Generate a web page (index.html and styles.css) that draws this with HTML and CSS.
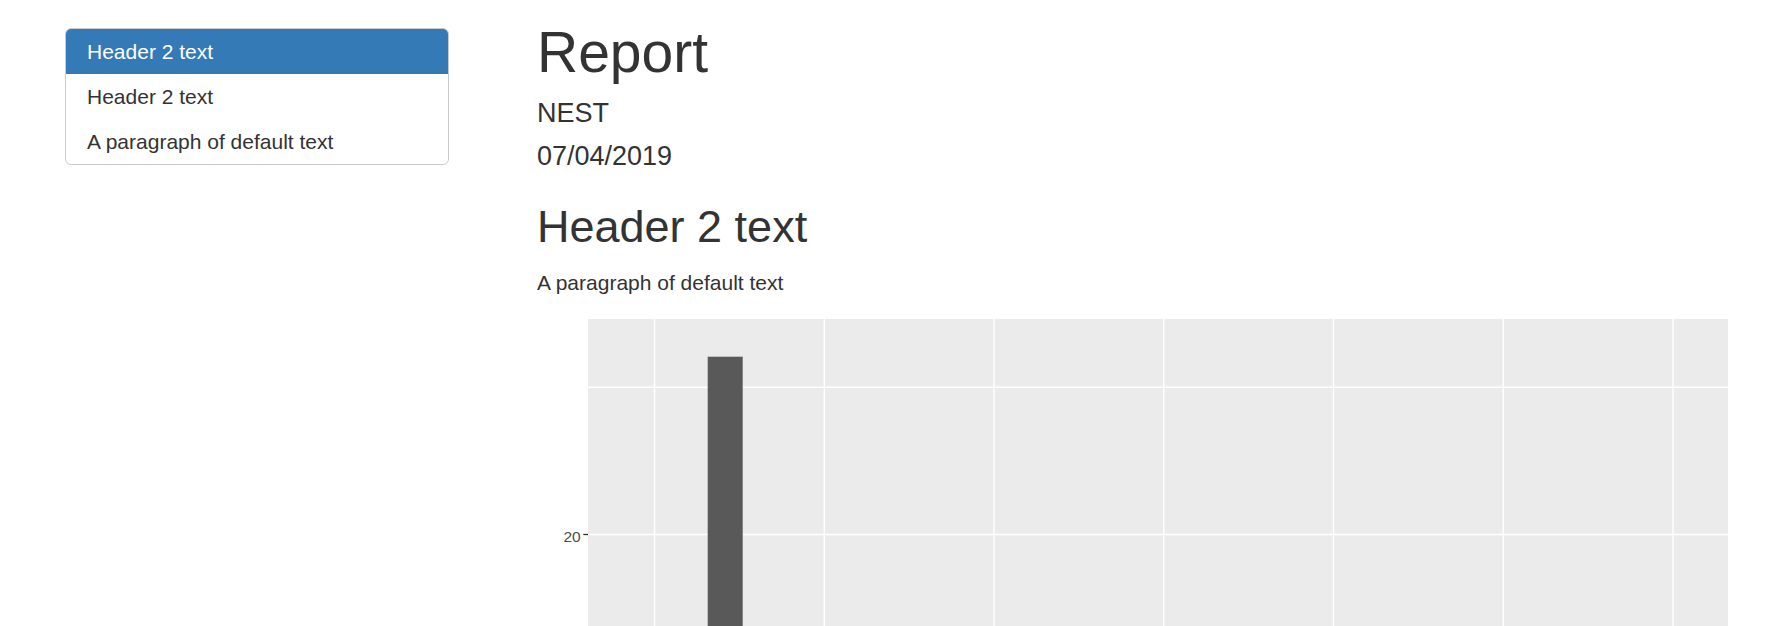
FILE: index.html
```html
<!DOCTYPE html>
<html lang="en">
<head>
<meta charset="utf-8">
<title>Report</title>
<link rel="stylesheet" href="styles.css">
</head>
<body>
<div class="page">
  <nav class="toc">
    <ul class="toc-list">
      <li class="toc-item active">Header 2 text</li>
      <li class="toc-item">Header 2 text</li>
      <li class="toc-item">A paragraph of default text</li>
    </ul>
  </nav>
  <main class="content">
    <h1 class="title">Report</h1>
    <h4 class="author">NEST</h4>
    <h4 class="date">07/04/2019</h4>
    <h2 class="section">Header 2 text</h2>
    <p class="para">A paragraph of default text</p>
    <svg class="chart" width="1250" height="326" viewBox="0 0 1250 326" xmlns="http://www.w3.org/2000/svg">
      <rect x="51" y="19" width="1140" height="320" fill="#ebebeb"/>
      <g stroke="#ffffff" stroke-width="1.4">
        <line x1="51" y1="87.3" x2="1191" y2="87.3"/>
        <line x1="51" y1="234.5" x2="1191" y2="234.5"/>
        <line x1="117.5" y1="19" x2="117.5" y2="326"/>
        <line x1="287.3" y1="19" x2="287.3" y2="326"/>
        <line x1="457" y1="19" x2="457" y2="326"/>
        <line x1="626.8" y1="19" x2="626.8" y2="326"/>
        <line x1="796.5" y1="19" x2="796.5" y2="326"/>
        <line x1="966.3" y1="19" x2="966.3" y2="326"/>
        <line x1="1136" y1="19" x2="1136" y2="326"/>
      </g>
      <rect x="170.7" y="56.7" width="35" height="280" fill="#595959"/>
      <line x1="46.3" y1="234.5" x2="51" y2="234.5" stroke="#333333" stroke-width="1.3"/>
      <text x="43.7" y="241.6" text-anchor="end" class="tick-label">20</text>
    </svg>
  </main>
</div>
</body>
</html>
```

FILE: styles.css
```css
html, body {
  margin: 0;
  padding: 0;
  background: #ffffff;
}

body {
  font-family: "Liberation Sans", Arial, Helvetica, sans-serif;
  font-size: 21px;
  color: #333333;
}

.page {
  display: flex;
  align-items: flex-start;
  padding-left: 65px;
  height: 626px;
  overflow: hidden;
}

.toc {
  flex: none;
  width: 384px;
  box-sizing: border-box;
  margin-top: 28px;
  border: 1px solid #cccccc;
  border-radius: 6px;
  overflow: hidden;
}

.toc-list {
  list-style: none;
  margin: 0;
  padding: 0;
}

.toc-item {
  padding: 10px 21px 9px;
  line-height: 26px;
  color: #333333;
}

.toc-item.active {
  background: #337ab7;
  color: #ffffff;
}

.content {
  flex: 1;
  min-width: 0;
  margin-left: 88px;
}

.title {
  font-size: 57px;
  font-weight: normal;
  line-height: 64px;
  margin: 20px 0 0;
}

.author,
.date {
  font-size: 27px;
  font-weight: normal;
  line-height: 30px;
  margin: 0;
}

.author {
  margin-top: 14px;
}

.date {
  margin-top: 13px;
}

.section {
  font-size: 45px;
  font-weight: normal;
  line-height: 48px;
  margin: 32px 0 0;
}

.para {
  margin: 19px 0 0;
  line-height: 26px;
}

.chart {
  display: block;
  margin-top: 4px;
}

.tick-label {
  font-family: "Liberation Sans", Arial, sans-serif;
  font-size: 15.5px;
  fill: #4d4d4d;
}
```
